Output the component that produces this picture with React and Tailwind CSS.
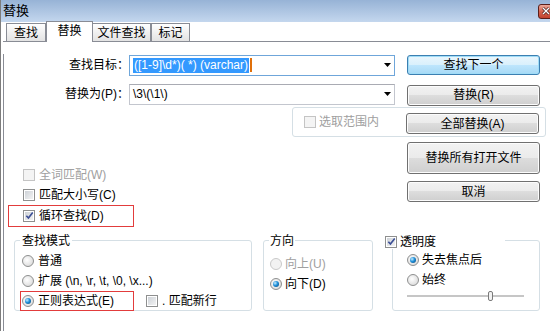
import React from "react";

function Check({ checked, disabled }) {
  return (
    <span
      className={
        "relative inline-block size-[12px] shrink-0 border " +
        (disabled
          ? "border-[#c4c4c4] bg-[#f4f4f4]"
          : "border-[#8e8f8f] bg-[linear-gradient(135deg,#c9ced4,#f7f7f7)] shadow-[inset_0_0_0_1px_#ffffff]")
      }
    >
      {checked && (
        <svg viewBox="0 0 10 10" className="absolute left-[1px] top-[0px] size-[9px]">
          <path d="M1.5 5.2 L3.8 7.8 L8.6 1.6" fill="none" stroke="#3c4f96" strokeWidth="1.8" />
        </svg>
      )}
    </span>
  );
}

function Radio({ checked, disabled }) {
  return (
    <span
      className={
        "flex size-[12px] shrink-0 items-center justify-center rounded-full border " +
        (disabled
          ? "border-[#c9c9c9] bg-[#f2f2f2]"
          : "border-[#8e8f8f] bg-[radial-gradient(circle_at_40%_40%,#ffffff,#d2d2d2)]")
      }
    >
      {checked && (
        <span className="size-[6px] rounded-full bg-[radial-gradient(circle_at_35%_35%,#c6ecff,#1f8fd8_45%,#073f70)]" />
      )}
    </span>
  );
}

function Btn({ children, h = "h-[21px]", primary }) {
  return (
    <div
      className={
        "flex w-[133px] items-center justify-center rounded-[3px] border text-[12px] " +
        h +
        (primary
          ? " border-[#3c7fb1] bg-[linear-gradient(#eaf6fd,#d9f0fc_50%,#bee6fd_50%,#a7d9f5)] shadow-[inset_0_0_0_1px_#9fdcf7]"
          : " border-[#707070] bg-[linear-gradient(#f2f2f2,#ebebeb_50%,#dddddd_50%,#cfcfcf)] shadow-[inset_0_0_0_1px_#fcfcfc]")
      }
    >
      {children}
    </div>
  );
}

function Arrow() {
  return (
    <svg viewBox="0 0 7 4" className="h-[4px] w-[7px]">
      <path d="M0 0 H7 L3.5 4 Z" fill="#000" />
    </svg>
  );
}

function Tab({ label, w, active, className = "" }) {
  return active ? (
    <div className={"-mb-px flex h-[21px] items-center justify-center border border-b-0 border-[#898c95] bg-white pb-[2px] " + w + " " + className}>
      {label}
    </div>
  ) : (
    <div className={"flex h-[18px] items-center justify-center border border-b-0 border-[#898c95] bg-[linear-gradient(#ffffff,#f0f0f0_50%,#e3e3e3)] " + w + " " + className}>
      {label}
    </div>
  );
}

export default function App() {
  return (
    <div className="relative h-[331px] w-[550px] overflow-hidden border-l border-[#7d7d7d] bg-white font-['Liberation_Sans','Noto_Sans_CJK_SC',sans-serif] text-[12px] leading-[14px] text-black">
      {/* title bar */}
      <div className="flex h-[22px] items-center justify-between bg-[linear-gradient(#97b3d6,#c4d7ee)] pl-[2px]">
        <span className="text-[13px]">替换</span>
        <div className="-mr-[3px] mt-[0px] flex h-[15px] w-[15px] items-center justify-center rounded-[3px] border border-[#5b1f1a] bg-[linear-gradient(#eaa899,#d7644f_50%,#c1432f)]">
          <svg viewBox="0 0 8 8" className="size-[8px]">
            <path d="M1 1 L7 7 M7 1 L1 7" stroke="#3a1410" strokeWidth="2.6" />
            <path d="M1 1 L7 7 M7 1 L1 7" stroke="#ffffff" strokeWidth="1.4" />
          </svg>
        </div>
      </div>

      {/* tabs */}
      <div className="ml-[2px] flex h-[20px] items-end border-b border-[#898c95] pl-[3px]">
        <Tab label="查找" w="w-[40px]" />
        <Tab label="替换" w="w-[47px]" active />
        <Tab label="文件查找" w="w-[59px]" className="-ml-px" />
        <Tab label="标记" w="w-[39px]" />
      </div>

      {/* panel */}
      <div className="ml-[2px] h-[283px] border-b border-l border-[#898c95]">
        {/* row A */}
        <div className="mt-[12px] flex h-[22px] items-center">
          <div className="w-[125px] text-right">查找目标：</div>
          <div className="flex h-[21px] w-[266px] items-center justify-between border border-[#6fa6da] pl-[3px] pr-[3px]">
            <span className="flex items-center">
              <span className="bg-[#3399ff] px-[1px] leading-[15px] text-white">([1-9]\d*)( *) (varchar)</span>
              <span className="ml-px h-[14px] w-[2px] bg-[#e0700a]" />
            </span>
            <Arrow />
          </div>
          <div className="ml-[12px]">
            <Btn h="h-[20px]" primary>查找下一个</Btn>
          </div>
        </div>

        {/* row B */}
        <div className="mt-[7px] flex h-[22px] items-center">
          <div className="w-[125px] text-right">替换为(P)：</div>
          <div className="flex h-[21px] w-[266px] items-center justify-between border border-[#c3c6ce] border-t-[#a9abb3] pl-[3px] pr-[3px]">
            <span>\3\(\1\)</span>
            <Arrow />
          </div>
          <div className="ml-[12px] mt-[2px]">
            <Btn>替换(R)</Btn>
          </div>
        </div>

        {/* row C: selection group */}
        <div className="ml-[288px] mt-[2px] flex h-[30px] w-[254px] items-center rounded-[3px] border border-[#d5dfe5] pl-[11px]">
          <Check disabled />
          <span className="ml-[3px] text-[#a0a0a0]">选取范围内</span>
          <div className="ml-[27px] mt-[3px]">
            <Btn>全部替换(A)</Btn>
          </div>
        </div>

        {/* row D */}
        <div className="flex h-[90px]">
          <div className="w-[403px] pt-[28px]">
            <div className="ml-[19px] flex h-[20px] items-center">
              <Check disabled />
              <span className="ml-[4px] text-[#a0a0a0]">全词匹配(W)</span>
            </div>
            <div className="ml-[19px] flex h-[20px] items-center">
              <Check />
              <span className="ml-[4px]">匹配大小写(C)</span>
            </div>
            <div className="ml-[4px] flex h-[22px] w-[126px] items-center border border-[#e23c3c] pl-[14px]">
              <Check checked />
              <span className="ml-[4px]">循环查找(D)</span>
            </div>
          </div>
          <div className="pt-[5px]">
            <Btn h="h-[32px]">替换所有打开文件</Btn>
            <div className="mt-[7px]">
              <Btn>取消</Btn>
            </div>
          </div>
        </div>

        {/* row E: groups */}
        <div className="mt-[13px] flex">
          <div className="relative ml-[10px] h-[71px] w-[238px] rounded-[3px] border border-[#d5dfe5] pl-[7px] pt-[10px]">
            <span className="absolute -top-[7px] left-[5px] bg-white px-[2px]">查找模式</span>
            <div className="flex h-[20px] items-center">
              <Radio />
              <span className="ml-[4px]">普通</span>
            </div>
            <div className="flex h-[20px] items-center">
              <Radio />
              <span className="ml-[4px]">扩展 (\n, \r, \t, \0, \x...)</span>
            </div>
            <div className="flex h-[20px] items-center">
              <div className="-ml-[2px] flex h-[20px] w-[114px] items-center border border-[#e23c3c] pl-[1px]">
                <Radio checked />
                <span className="ml-[4px]">正则表达式(E)</span>
              </div>
              <div className="ml-[12px] flex items-center">
                <Check />
                <span className="ml-[4px]">. 匹配新行</span>
              </div>
            </div>
          </div>

          <div className="relative ml-[11px] h-[71px] w-[110px] rounded-[3px] border border-[#d5dfe5] pl-[6px] pt-[13px]">
            <span className="absolute -top-[7px] left-[5px] bg-white px-[1px]">方向</span>
            <div className="flex h-[20px] items-center">
              <Radio disabled />
              <span className="ml-[3px] text-[#a0a0a0]">向上(U)</span>
            </div>
            <div className="flex h-[20px] items-center">
              <Radio checked />
              <span className="ml-[3px]">向下(D)</span>
            </div>
          </div>

          <div className="relative ml-[19px] h-[71px] w-[148px] rounded-[3px] border border-[#d5dfe5] pl-[14px] pt-[9px]">
            <div className="absolute -left-[8px] -top-[7px] flex h-[15px] w-[120px] items-center bg-white">
              <Check checked />
              <span className="ml-[3px]">透明度</span>
            </div>
            <div className="flex h-[20px] items-center">
              <Radio checked />
              <span className="ml-[3px]">失去焦点后</span>
            </div>
            <div className="flex h-[20px] items-center">
              <Radio />
              <span className="ml-[3px]">始终</span>
            </div>
            <div className="relative mt-[5px] h-[3px] w-[117px] border-b border-white bg-[#c6c6c6]">
              <div className="absolute -top-[4px] left-[81px] h-[10px] w-[5px] rounded-[2px] border border-[#7a7a7a] bg-[#f2f2f2]" />
            </div>
          </div>
        </div>
      </div>
      <div className="h-[5px] bg-[#f4f4f4]" />
    </div>
  );
}
